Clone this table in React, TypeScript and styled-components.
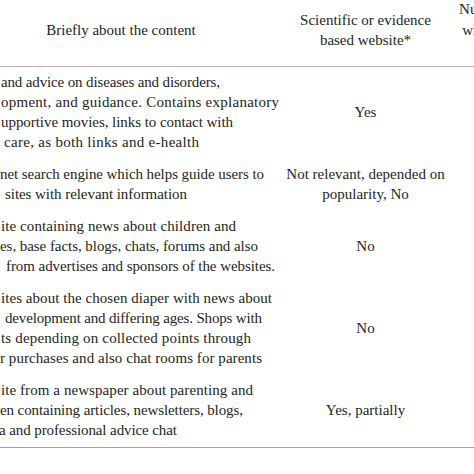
import { useLayoutEffect, useRef, useState } from "react";
import styled, { createGlobalStyle } from "styled-components";

const GlobalStyle = createGlobalStyle`
  html, body {
    margin: 0;
    padding: 0;
    background: #ffffff;
    overflow: hidden;
  }
`;

// indent = where the first visible glyph starts, end = where the line ends (page x)
type Line = { text: string; indent: number; end: number };
type Row = { about: Line[]; evidence: string[] };

const rows: Row[] = [
  {
    about: [
      { text: "and advice on diseases and disorders,", indent: 1, end: 220 },
      { text: "opment, and guidance. Contains explanatory", indent: 1, end: 279 },
      { text: "upportive movies, links to contact with", indent: 1, end: 233 },
      { text: "care, as both links and e-health", indent: 4, end: 199 },
    ],
    evidence: ["Yes"],
  },
  {
    about: [
      { text: "net search engine which helps guide users to", indent: 0, end: 264 },
      { text: "sites with relevant information", indent: 5, end: 187 },
    ],
    evidence: ["Not relevant, depended on", "popularity, No"],
  },
  {
    about: [
      { text: "ite containing news about children and", indent: 1, end: 236 },
      { text: "es, base facts, blogs, chats, forums and also", indent: 0, end: 258 },
      { text: "from advertises and sponsors of the websites.", indent: 6, end: 275 },
    ],
    evidence: ["No"],
  },
  {
    about: [
      { text: "ites about the chosen diaper with news about", indent: 1, end: 272 },
      { text: "development and differing ages. Shops with", indent: 5, end: 262 },
      { text: "ts depending on collected points through", indent: 1, end: 251 },
      { text: "r purchases and also chat rooms for parents", indent: 0, end: 262 },
    ],
    evidence: ["No"],
  },
  {
    about: [
      { text: "ite from a newspaper about parenting and", indent: 1, end: 253 },
      { text: "en containing articles, newsletters, blogs,", indent: 0, end: 243 },
      { text: "a and professional advice chat", indent: -1, end: 177 },
    ],
    evidence: ["Yes, partially"],
  },
];

// stretches a line's tracking a little so it ends where the printed line ends
const FitLine = ({ line }: { line: Line }) => {
  const ref = useRef<HTMLSpanElement>(null);
  const [spacing, setSpacing] = useState(0);

  useLayoutEffect(() => {
    if (!ref.current) return;
    const right = ref.current.getBoundingClientRect().right;
    const diff = line.end - right;
    setSpacing(diff / Math.max(line.text.length - 1, 1));
  }, [line]);

  return (
    <TextLine $indent={line.indent}>
      <span ref={ref} style={{ letterSpacing: `${spacing}px` }}>
        {line.text}
      </span>
    </TextLine>
  );
};

const App = () => {
  return (
    <>
      <GlobalStyle />
      <Viewport>
        <Table>
          <HeadCell>Briefly about the content</HeadCell>
          <HeadCell>
            Scientific or evidence
            <br />
            based website*
          </HeadCell>
          <HeadCell>
            Number of hits
            <br />
            when googled
            <br />
            in 2016
          </HeadCell>

          {rows.map((row, i) => {
            const last = i === rows.length - 1;
            return [
              <AboutCell key={`a${i}`} $last={last}>
                {row.about.map((line, j) => (
                  <FitLine key={j} line={line} />
                ))}
              </AboutCell>,
              <CenterCell key={`e${i}`} $last={last}>
                <div>
                  {row.evidence.map((t, j) => (
                    <TextLine key={j} $indent={0}>
                      {t}
                    </TextLine>
                  ))}
                </div>
              </CenterCell>,
              <CenterCell key={`n${i}`} $last={last} />,
            ];
          })}
        </Table>
      </Viewport>
    </>
  );
};

const Viewport = styled.div`
  width: 474px;
  height: 474px;
  overflow: hidden;
  font-family: "Liberation Serif", "Times New Roman", serif;
  font-size: 15px;
  color: #231f20;
`;

// the table is cropped on the left, so it starts before the viewport edge
const Table = styled.div`
  display: grid;
  grid-template-columns: 322px 167px 111px;
  width: 600px;
  margin-left: -40px;
`;

const HeadCell = styled.div`
  height: 60px;
  padding-bottom: 6px;
  border-bottom: 1px solid #c9abb2;
  display: flex;
  align-items: center;
  justify-content: center;
  text-align: center;
  line-height: 20.5px;
`;

const BodyCell = styled.div<{ $last?: boolean }>`
  padding: 5px 0 7px;
  line-height: 20px;
  border-bottom: ${(p) => (p.$last ? "1px solid #c6939c" : "none")};
`;

const AboutCell = styled(BodyCell)`
  padding-left: 40px;
`;

const CenterCell = styled(BodyCell)`
  display: flex;
  align-items: center;
  justify-content: center;
  text-align: center;
`;

const TextLine = styled.span<{ $indent: number }>`
  display: block;
  white-space: nowrap;
  padding-left: ${(p) => Math.max(p.$indent, 0)}px;
  margin-left: ${(p) => Math.min(p.$indent, 0)}px;
`;

export default App;
